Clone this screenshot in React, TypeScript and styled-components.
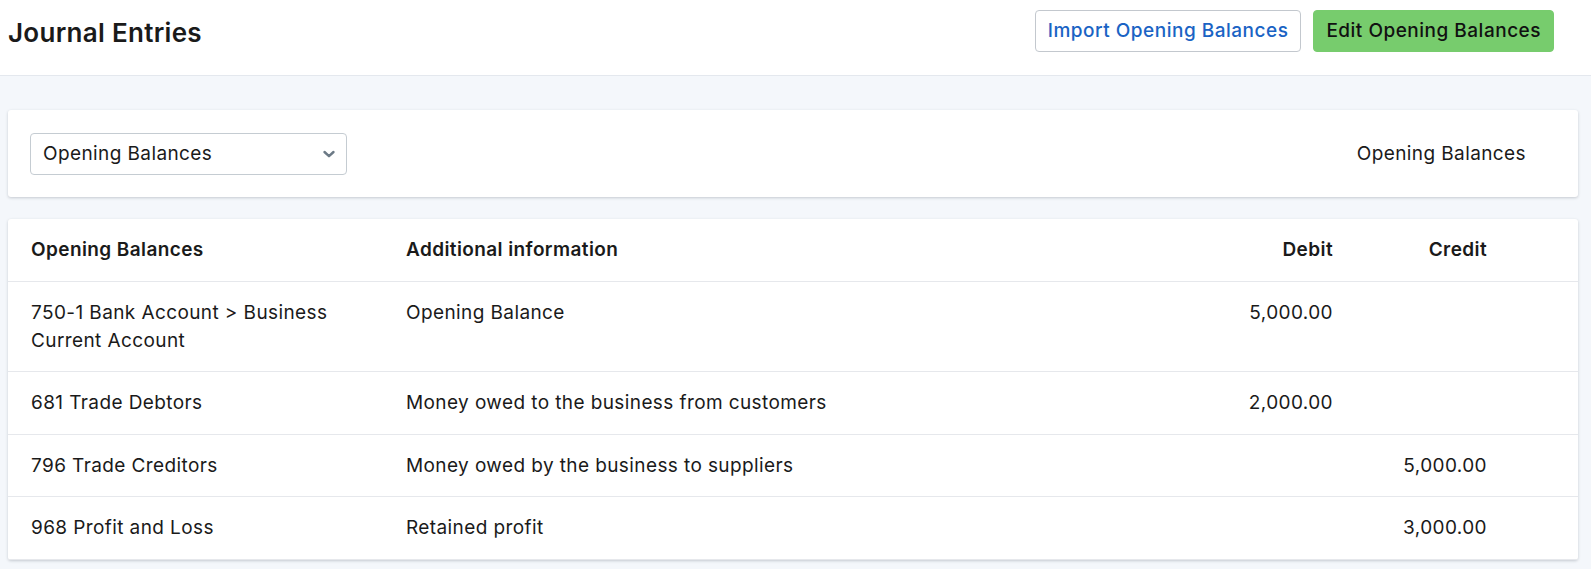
import React from 'react'
import styled, { createGlobalStyle } from 'styled-components'

const GlobalStyle = createGlobalStyle`
  html, body {
    margin: 0;
    padding: 0;
    overflow: hidden;
    background: #f4f7fb;
    font-family: Inter, 'Liberation Sans', sans-serif;
    color: #1a1a1a;
  }
  * {
    box-sizing: border-box;
  }
`

const Page = styled.div`
  width: 100%;
  height: 569px;
  overflow: hidden;
  background: #f4f7fb;
`

const Header = styled.header`
  height: 76px;
  background: #fff;
  border-bottom: 1px solid #e4e8ee;
  display: flex;
  align-items: center;
  justify-content: space-between;
  padding: 0 37px 0 8px;
`

const Title = styled.h1`
  margin: 0;
  margin-top: -10px;
  font-size: 26px;
  font-weight: 600;
  letter-spacing: 0.3px;
`

const Actions = styled.div`
  display: flex;
  gap: 12px;
  margin-top: -14px;
`

const Button = styled.button<{ $primary?: boolean }>`
  height: 42px;
  padding: 0 12px;
  border-radius: 4px;
  font-family: inherit;
  font-size: 19px;
  font-weight: 500;
  letter-spacing: 0.5px;
  cursor: pointer;
  border: 1px solid ${(p) => (p.$primary ? '#77cc6d' : '#c3c8ce')};
  background: ${(p) => (p.$primary ? '#77cc6d' : '#fff')};
  color: ${(p) => (p.$primary ? '#111' : '#1a63c4')};
`

const Content = styled.main`
  padding: 34px 13px 0 8px;
  display: flex;
  flex-direction: column;
  gap: 22px;
`

const Card = styled.section`
  background: #fff;
  border-radius: 3px;
  box-shadow: 0 1px 3px rgba(30, 40, 60, 0.22);
`

const FilterBar = styled(Card)`
  height: 87px;
  display: flex;
  align-items: center;
  justify-content: space-between;
  padding: 0 52px 0 22px;
`

const SelectBox = styled.div`
  width: 317px;
  height: 42px;
  border: 1px solid #c5ccd2;
  border-radius: 4px;
  display: flex;
  align-items: center;
  justify-content: space-between;
  padding: 0 10px 0 12px;
  font-size: 19px;
  letter-spacing: 0.4px;
`

const FilterLabel = styled.span`
  font-size: 19px;
  letter-spacing: 0.4px;
`

const Row = styled.div<{ $head?: boolean }>`
  display: grid;
  grid-template-columns: 375px 1fr 180px 154px 68px;
  border-bottom: 1px solid #e6e8ec;
  font-size: 19px;
  letter-spacing: 0.4px;
  line-height: 28px;
  font-weight: ${(p) => (p.$head ? 600 : 400)};
`

const Cell = styled.div<{ $right?: boolean }>`
  padding: 17px 23px 16.5px;
  text-align: ${(p) => (p.$right ? 'right' : 'left')};
`

const Chevron = () => (
  <svg width="14" height="14" viewBox="0 0 14 14">
    <path
      d="M2.5 5 L7 9.2 L11.5 5"
      fill="none"
      stroke="#6c7a86"
      strokeWidth="2.4"
      strokeLinecap="round"
      strokeLinejoin="round"
    />
  </svg>
)

const entries = [
  {
    account: '750-1 Bank Account > Business Current Account',
    info: 'Opening Balance',
    debit: '5,000.00',
    credit: '',
  },
  {
    account: '681 Trade Debtors',
    info: 'Money owed to the business from customers',
    debit: '2,000.00',
    credit: '',
  },
  {
    account: '796 Trade Creditors',
    info: 'Money owed by the business to suppliers',
    debit: '',
    credit: '5,000.00',
  },
  {
    account: '968 Profit and Loss',
    info: 'Retained profit',
    debit: '',
    credit: '3,000.00',
  },
]

const App = () => {
  return (
    <Page>
      <GlobalStyle />
      <Header>
        <Title>Journal Entries</Title>
        <Actions>
          <Button>Import Opening Balances</Button>
          <Button $primary>Edit Opening Balances</Button>
        </Actions>
      </Header>
      <Content>
        <FilterBar>
          <SelectBox>
            <span>Opening Balances</span>
            <Chevron />
          </SelectBox>
          <FilterLabel>Opening Balances</FilterLabel>
        </FilterBar>
        <Card>
          <Row $head>
            <Cell>Opening Balances</Cell>
            <Cell>Additional information</Cell>
            <Cell $right>Debit</Cell>
            <Cell $right>Credit</Cell>
            <Cell />
          </Row>
          {entries.map((e, i) => (
            <Row key={i}>
              <Cell>{e.account}</Cell>
              <Cell>{e.info}</Cell>
              <Cell $right>{e.debit}</Cell>
              <Cell $right>{e.credit}</Cell>
              <Cell />
            </Row>
          ))}
        </Card>
      </Content>
    </Page>
  )
}

export default App
